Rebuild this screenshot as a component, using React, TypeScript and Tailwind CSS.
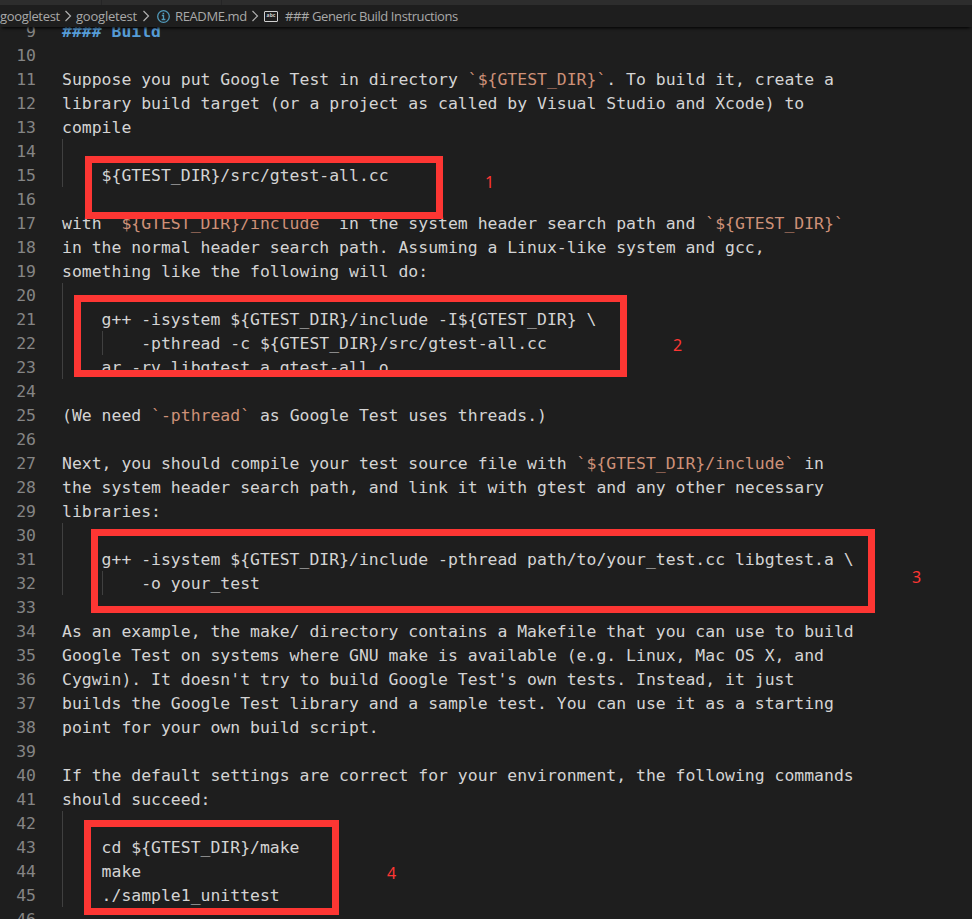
import React from "react";

type Row = { text: string; guides?: number[]; heading?: boolean };

const FIRST_LINE = 9;

const rows: Row[] = [
  { text: "#### Build", heading: true },
  { text: "" },
  { text: "Suppose you put Google Test in directory `${GTEST_DIR}`. To build it, create a" },
  { text: "library build target (or a project as called by Visual Studio and Xcode) to" },
  { text: "compile" },
  { text: "", guides: [0] },
  { text: "    ${GTEST_DIR}/src/gtest-all.cc", guides: [0] },
  { text: "" },
  { text: "with `${GTEST_DIR}/include` in the system header search path and `${GTEST_DIR}`" },
  { text: "in the normal header search path. Assuming a Linux-like system and gcc," },
  { text: "something like the following will do:" },
  { text: "", guides: [0] },
  { text: "    g++ -isystem ${GTEST_DIR}/include -I${GTEST_DIR} \\", guides: [0] },
  { text: "        -pthread -c ${GTEST_DIR}/src/gtest-all.cc", guides: [0, 1] },
  { text: "    ar -rv libgtest.a gtest-all.o", guides: [0] },
  { text: "" },
  { text: "(We need `-pthread` as Google Test uses threads.)" },
  { text: "" },
  { text: "Next, you should compile your test source file with `${GTEST_DIR}/include` in" },
  { text: "the system header search path, and link it with gtest and any other necessary" },
  { text: "libraries:" },
  { text: "", guides: [0] },
  { text: "    g++ -isystem ${GTEST_DIR}/include -pthread path/to/your_test.cc libgtest.a \\", guides: [0] },
  { text: "        -o your_test", guides: [0, 1] },
  { text: "" },
  { text: "As an example, the make/ directory contains a Makefile that you can use to build" },
  { text: "Google Test on systems where GNU make is available (e.g. Linux, Mac OS X, and" },
  { text: "Cygwin). It doesn't try to build Google Test's own tests. Instead, it just" },
  { text: "builds the Google Test library and a sample test. You can use it as a starting" },
  { text: "point for your own build script." },
  { text: "" },
  { text: "If the default settings are correct for your environment, the following commands" },
  { text: "should succeed:" },
  { text: "", guides: [0] },
  { text: "    cd ${GTEST_DIR}/make", guides: [0] },
  { text: "    make", guides: [0] },
  { text: "    ./sample1_unittest", guides: [0] },
  { text: "" },
];

function CodeRow({ row, number }: { row: Row; number: number }) {
  return (
    <div className="flex h-6 shrink-0 whitespace-pre leading-[26px]">
      <span className="w-[36px] shrink-0 text-right text-[#858585]">{number}</span>
      <div className="relative ml-[26px]">
        {row.guides?.map((g) => (
          <span
            key={g}
            className={g === 0 ? "absolute top-0 left-0 h-6 w-px bg-[#404040]" : "absolute top-0 left-[40px] h-6 w-px bg-[#404040]"}
          />
        ))}
        <span className={row.heading ? "font-bold text-[#569cd6]" : "text-[#d4d4d4]"}>
          {row.text.split(/(`[^`]*`)/).map((part, i) => (
            <span key={i} className={part.startsWith("`") ? "text-[#ce9178]" : ""}>
              {part}
            </span>
          ))}
        </span>
      </div>
    </div>
  );
}

function Chevron() {
  return (
    <svg width="16" height="16" viewBox="0 0 16 16" className="shrink-0" fill="none" stroke="#b0b0b0" strokeWidth="1.2">
      <path d="M5.5 3 L10.5 8 L5.5 13" />
    </svg>
  );
}

function InfoIcon() {
  return (
    <svg width="13" height="13" viewBox="0 0 13 13" className="shrink-0" fill="none" stroke="#519aba">
      <circle cx="6.5" cy="6.5" r="5.8" strokeWidth="1.3" />
      <path d="M4.8 5.5 H6.5 V9.5 M4.6 9.5 H8.4" strokeWidth="1.3" />
      <path d="M5.6 3.5 H7.2" strokeWidth="1.5" />
    </svg>
  );
}

function StringSymbol() {
  return (
    <span className="ml-px flex h-[11px] w-[14px] shrink-0 items-center justify-center rounded-[1px] border border-[#d0d0d0] text-[5px] leading-none font-bold text-[#d0d0d0]">
      <span className="-mt-px">abc</span>
    </span>
  );
}

function Breadcrumbs() {
  return (
    <div className="relative z-10 flex h-[22px] shrink-0 items-center bg-[#1e1e1e] font-['Open_Sans','Noto_Sans',sans-serif] text-[13px] leading-[22px] whitespace-pre text-[#a9a9a9] shadow-[0_3px_3px_-2px_#000000]">
      <span className="w-[60px] tracking-[-0.33px]">googletest</span>
      <Chevron />
      <span className="w-[62px] tracking-[-0.22px]">googletest</span>
      <Chevron />
      <span className="ml-[3px] flex"><InfoIcon /></span>
      <span className="ml-[5px] w-[72px] tracking-[-0.38px]">README.md</span>
      <Chevron />
      <StringSymbol />
      <span className="ml-[7px] tracking-[-0.4px]">### Generic Build Instructions</span>
    </div>
  );
}

const markers = [
  { n: 1, box: "left-[85px] top-[156px] w-[358px] h-[63px]", label: "left-[485px] top-[172px]" },
  { n: 2, box: "left-[74px] top-[295px] w-[553px] h-[82px]", label: "left-[673px] top-[335px]" },
  { n: 3, box: "left-[91px] top-[529px] w-[784px] h-[84px]", label: "left-[912px] top-[567px]" },
  { n: 4, box: "left-[84px] top-[820px] w-[255px] h-[95px]", label: "left-[387px] top-[863px]" },
];

export default function App() {
  return (
    <div className="relative flex h-[919px] w-[972px] flex-col overflow-hidden bg-[#1e1e1e]">
      <div className="relative z-20 flex h-[5px] shrink-0 bg-[#2d2d2d]">
        <div className="w-[102px] border-r border-[#252526]" />
        <div className="w-[120px] border-r border-[#252526]" />
      </div>
      <Breadcrumbs />
      <div className="-mt-2 flex flex-col font-['DejaVu_Sans_Mono',monospace] text-[16.44px]">
        {rows.map((row, i) => (
          <CodeRow key={i} row={row} number={FIRST_LINE + i} />
        ))}
      </div>
      {markers.map((m) => (
        <React.Fragment key={m.n}>
          <div className={`absolute z-20 border-[7px] border-[#fd3633] ${m.box}`} />
          <span className={`absolute z-20 font-['Noto_Sans',sans-serif] text-[16px] leading-5 text-[#fd3633] ${m.label}`}>{m.n}</span>
        </React.Fragment>
      ))}
    </div>
  );
}
